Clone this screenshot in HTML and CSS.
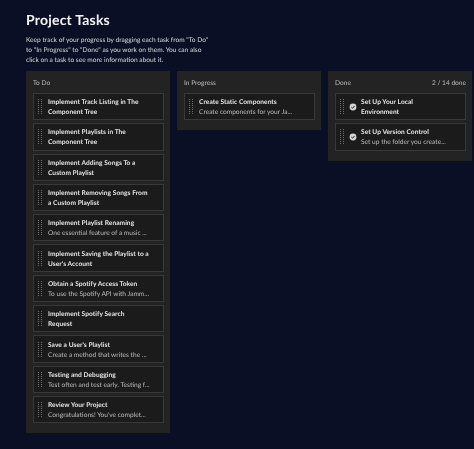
FILE: index.html
```html
<!DOCTYPE html>
<html lang="en">
<head>
<meta charset="utf-8">
<title>Project Tasks</title>
<link rel="stylesheet" href="styles.css">
</head>
<body>
<main class="page">
  <h1 class="title">Project Tasks</h1>
  <p class="intro">Keep track of your progress by dragging each task from "To Do" to "In Progress" to "Done" as you work on them. You can also click on a task to see more information about it.</p>
  <div class="board">
    <section class="column">
      <header class="column-head"><span>To Do</span></header>
      <div class="card"><span class="grip"></span><div class="body"><div class="name">Implement Track Listing in The Component Tree</div></div></div>
      <div class="card"><span class="grip"></span><div class="body"><div class="name">Implement Playlists in The Component Tree</div></div></div>
      <div class="card"><span class="grip"></span><div class="body"><div class="name">Implement Adding Songs To a Custom Playlist</div></div></div>
      <div class="card"><span class="grip"></span><div class="body"><div class="name">Implement Removing Songs From a Custom Playlist</div></div></div>
      <div class="card"><span class="grip"></span><div class="body"><div class="name">Implement Playlist Renaming</div><div class="desc">One essential feature of a music ...</div></div></div>
      <div class="card"><span class="grip"></span><div class="body"><div class="name">Implement Saving the Playlist to a User's Account</div></div></div>
      <div class="card"><span class="grip"></span><div class="body"><div class="name">Obtain a Spotify Access Token</div><div class="desc">To use the Spotify API with Jamm...</div></div></div>
      <div class="card"><span class="grip"></span><div class="body"><div class="name">Implement Spotify Search Request</div></div></div>
      <div class="card"><span class="grip"></span><div class="body"><div class="name">Save a User's Playlist</div><div class="desc">Create a method that writes the ...</div></div></div>
      <div class="card"><span class="grip"></span><div class="body"><div class="name">Testing and Debugging</div><div class="desc">Test often and test early. Testing f...</div></div></div>
      <div class="card"><span class="grip"></span><div class="body"><div class="name">Review Your Project</div><div class="desc">Congratulations! You've complet...</div></div></div>
    </section>
    <section class="column">
      <header class="column-head"><span>In Progress</span></header>
      <div class="card"><span class="grip"></span><div class="body"><div class="name">Create Static Components</div><div class="desc">Create components for your Ja...</div></div></div>
    </section>
    <section class="column">
      <header class="column-head"><span>Done</span><span>2 / 14 done</span></header>
      <div class="card"><span class="grip"></span>
        <svg class="check" viewBox="0 0 8 8"><circle cx="4" cy="4" r="3.4"/><path d="M2.4 4.1 3.6 5.2 5.6 2.9"/></svg>
        <div class="body"><div class="name">Set Up Your Local Environment</div></div></div>
      <div class="card"><span class="grip"></span>
        <svg class="check" viewBox="0 0 8 8"><circle cx="4" cy="4" r="3.4"/><path d="M2.4 4.1 3.6 5.2 5.6 2.9"/></svg>
        <div class="body"><div class="name">Set Up Version Control</div><div class="desc">Set up the folder you create...</div></div></div>
    </section>
  </div>
</main>
</body>
</html>
```
FILE: styles.css
```css
* { box-sizing: border-box; }
html, body { margin: 0; height: 100%; }
body {
  background: #0a0f26;
  color: #e6e6e6;
  font-family: Lato, "Liberation Sans", sans-serif;
  text-rendering: geometricPrecision;
  overflow: hidden;
}
.page { padding: 11px 2px 0 26px; will-change: opacity; }
.title {
  margin: 0 0 6px;
  font-size: 14px;
  line-height: 18px;
  font-weight: 700;
  letter-spacing: 0.2px;
  color: #f4f4f4;
}
.intro {
  margin: 0 0 6px;
  width: 184px;
  font-size: 6.6px;
  line-height: 10px;
  color: #d8d8da;
}
.board { display: flex; gap: 7px; align-items: flex-start; }
.column {
  width: 144px;
  padding: 6px 6px 10px 7px;
  background: #232323;
  display: flex;
  flex-direction: column;
  gap: 3px;
}
.column-head {
  display: flex;
  justify-content: space-between;
  height: 12px;
  padding-top: 1px;
  margin-bottom: 1px;
  font-size: 6.6px;
  line-height: 10px;
  color: #bdbdbd;
}
.card {
  display: flex;
  align-items: center;
  height: 27.3px;
  padding: 0 14px 0 4px;
  background: #1b1b1b;
  border: 1px solid #383838;
}
.grip {
  flex: none;
  width: 4px;
  height: 15px;
  margin-right: 6px;
  border-left: 1px dotted #6e6e6e;
  border-right: 1px dotted #6e6e6e;
}
.check { flex: none; width: 8px; height: 8px; margin-right: 4px; margin-left: -1px; }
.check circle { fill: #d6d6d6; }
.check path { fill: none; stroke: #1b1b1b; stroke-width: 1; }
.body { min-width: 0; padding-top: 1px; }
.name, .desc { font-size: 6.6px; line-height: 10px; }
.name { font-weight: 700; color: #e4e4e4; letter-spacing: 0.05px; }
.desc { color: #bbbbbb; white-space: nowrap; }
```
